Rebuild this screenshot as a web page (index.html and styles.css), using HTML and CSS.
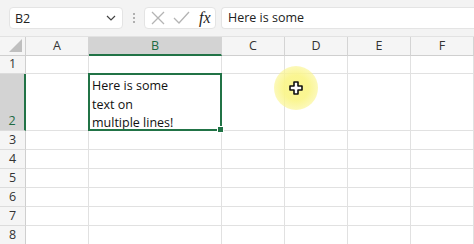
FILE: index.html
```html
<!DOCTYPE html>
<html lang="en">
<head>
	<meta charset="UTF-8">
	<title>Wrap text</title>
	<link rel="stylesheet" href="styles.css">
</head>
<body>
	<div class="toolbar">
		<div class="namebox">
			<span>B2</span>
			<svg class="chev" width="10" height="6" viewBox="0 0 10 6"><path d="M1 1 L5 5 L9 1" fill="none" stroke="#444" stroke-width="1.2"/></svg>
		</div>
		<div class="dots"><i></i><i></i><i></i></div>
		<div class="fxbox">
			<svg width="14" height="14" viewBox="0 0 14 14"><path d="M1 1 L13 13 M13 1 L1 13" stroke="#b4b4b4" stroke-width="1.3"/></svg>
			<svg width="17" height="14" viewBox="0 0 17 14"><path d="M1 7 L6 12 L16 1" fill="none" stroke="#b4b4b4" stroke-width="1.3"/></svg>
			<span class="fx">fx</span>
		</div>
		<div class="formula">Here is some</div>
	</div>

	<div class="sheet">
		<div class="corner"><span></span></div>
		<div class="colhead">A</div>
		<div class="colhead sel">B</div>
		<div class="colhead">C</div>
		<div class="colhead">D</div>
		<div class="colhead">E</div>
		<div class="colhead">F</div>

		<div class="rowhead">1</div>
		<div class="cell"></div><div class="cell"></div><div class="cell"></div><div class="cell"></div><div class="cell"></div><div class="cell"></div>

		<div class="rowhead sel">2</div>
		<div class="cell"></div>
		<div class="cell active">Here is some<br>text on<br>multiple lines!<span class="handle"></span></div>
		<div class="cell"></div><div class="cell"></div><div class="cell"></div><div class="cell"></div>

		<div class="rowhead">3</div>
		<div class="cell"></div><div class="cell"></div><div class="cell"></div><div class="cell"></div><div class="cell"></div><div class="cell"></div>
		<div class="rowhead">4</div>
		<div class="cell"></div><div class="cell"></div><div class="cell"></div><div class="cell"></div><div class="cell"></div><div class="cell"></div>
		<div class="rowhead">5</div>
		<div class="cell"></div><div class="cell"></div><div class="cell"></div><div class="cell"></div><div class="cell"></div><div class="cell"></div>
		<div class="rowhead">6</div>
		<div class="cell"></div><div class="cell"></div><div class="cell"></div><div class="cell"></div><div class="cell"></div><div class="cell"></div>
		<div class="rowhead">7</div>
		<div class="cell"></div><div class="cell"></div><div class="cell"></div><div class="cell"></div><div class="cell"></div><div class="cell"></div>
		<div class="rowhead">8</div>
		<div class="cell"></div><div class="cell"></div><div class="cell"></div><div class="cell"></div><div class="cell"></div><div class="cell"></div>

		<div class="pointer">
			<svg width="14" height="14" viewBox="0 0 14 14"><path d="M5 1 H9 V5 H13 V9 H9 V13 H5 V9 H1 V5 H5 Z" fill="#fff" stroke="#111" stroke-width="1.6" stroke-linejoin="round"/></svg>
		</div>
	</div>
</body>
</html>
```

FILE: styles.css
```css
body {
	margin: 0;
	width: 474px;
	height: 244px;
	overflow: hidden;
	background: #fff;
	font-family: "Open Sans", "Noto Sans", sans-serif;
	font-size: 12.5px;
	color: #222;
}

/* top bar */
.toolbar {
	height: 37px;
	box-sizing: border-box;
	background: #f3f3f3;
	border-bottom: 1px solid #e2e2e2;
	display: flex;
	align-items: center;
	padding-left: 9px;
}
.namebox {
	width: 114px;
	height: 22px;
	box-sizing: border-box;
	background: #fff;
	border: 1px solid #e4e4e4;
	border-radius: 4px;
	display: flex;
	align-items: center;
	justify-content: space-between;
	padding: 0 6px 0 5px;
}
.dots {
	width: 21px;
	display: flex;
	flex-direction: column;
	align-items: center;
	gap: 2px;
}
.dots i {
	width: 2px;
	height: 2px;
	background: #9a9a9a;
	border-radius: 1px;
}
.fxbox {
	width: 72px;
	height: 22px;
	box-sizing: border-box;
	background: #fff;
	border: 1px solid #e4e4e4;
	border-radius: 4px;
	display: flex;
	align-items: center;
	gap: 8px;
	padding-left: 6px;
}
.fx {
	font-family: "Liberation Serif", serif;
	font-style: italic;
	font-size: 16px;
	color: #222;
	margin-left: 1px;
}
.formula {
	flex: 1;
	height: 22px;
	box-sizing: border-box;
	margin-left: 5px;
	background: #fff;
	border: 1px solid #e4e4e4;
	border-right: none;
	border-radius: 4px 0 0 4px;
	padding-left: 6px;
	line-height: 20px;
}

/* grid */
.sheet {
	position: relative;
	display: grid;
	grid-template-columns: 26px 63px 133px 63px 63px 63px 63px;
	grid-template-rows: 19px 18px 57px repeat(6, 19px);
}
.corner {
	background: #f5f5f5;
	border-right: 1px solid #cfcfcf;
	border-bottom: 1px solid #cfcfcf;
	position: relative;
}
.corner span {
	position: absolute;
	right: 3px;
	bottom: 3px;
	width: 0;
	height: 0;
	border-left: 13px solid transparent;
	border-bottom: 13px solid #bfbfbf;
}
.colhead {
	background: #f5f5f5;
	border-right: 1px solid #d4d4d4;
	border-bottom: 1px solid #cfcfcf;
	text-align: center;
	line-height: 18px;
	color: #333;
}
.colhead.sel {
	background: #d3d3d3;
	color: #1e6b43;
	border-bottom: 2px solid #217346;
	line-height: 18px;
}
.rowhead {
	background: #f5f5f5;
	border-right: 1px solid #cfcfcf;
	border-bottom: 1px solid #dcdcdc;
	text-align: center;
	display: flex;
	align-items: flex-end;
	justify-content: center;
	padding-bottom: 0;
	line-height: 18px;
	color: #333;
}
.rowhead.sel {
	background: #d3d3d3;
	color: #1e6b43;
	border-right: 2px solid #217346;
}
.cell {
	border-right: 1px solid #e1e1e1;
	border-bottom: 1px solid #e1e1e1;
}
.cell.active {
	position: relative;
	padding: 3px 0 0 3px;
	line-height: 18.5px;
	color: #111;
}
.cell.active::after {
	content: "";
	position: absolute;
	left: -1px;
	top: -1px;
	right: -1px;
	bottom: -1px;
	border: 2px solid #217346;
}
.handle {
	position: absolute;
	right: -3px;
	bottom: -3px;
	width: 5px;
	height: 5px;
	background: #217346;
	border: 1px solid #fff;
	z-index: 1;
}

/* mouse highlight */
.pointer {
	position: absolute;
	left: 274px;
	top: 29px;
	width: 44px;
	height: 44px;
	border-radius: 50%;
	background: radial-gradient(circle, rgba(250,245,140,0.95) 40%, rgba(250,245,150,0.6) 75%, rgba(255,255,200,0) 100%);
	display: flex;
	align-items: center;
	justify-content: center;
}
```
